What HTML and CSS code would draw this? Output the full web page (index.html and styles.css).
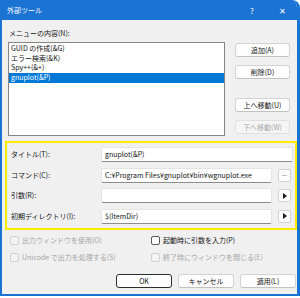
FILE: index.html
```html
<!DOCTYPE html>
<html lang="ja">
<head>
<meta charset="utf-8">
<link rel="stylesheet" href="styles.css">
</head>
<body>
<div class="window">
  <div class="titlebar">
    <span class="title">外部ツール</span>
    <span class="tb-help">?</span>
    <span class="tb-close">✕</span>
  </div>
  <div class="content">
    <div class="top">
      <div class="list-label">メニューの内容(N):</div>
      <div class="listbox">
        <div class="item">GUID の作成(&amp;G)</div>
        <div class="item">エラー検索(&amp;K)</div>
        <div class="item">Spy++(&amp;+)</div>
        <div class="item selected">gnuplot(&amp;P)</div>
      </div>
      <div class="side">
        <div class="btn">追加(A)</div>
        <div class="btn">削除(D)</div>
        <div class="btn gap">上へ移動(U)</div>
        <div class="btn disabled">下へ移動(W)</div>
      </div>
    </div>
    <div class="fields">
      <div class="flabel">タイトル(T):</div>
      <div class="input wide">gnuplot(&amp;P)</div>
      <div class="flabel">コマンド(C):</div>
      <div class="input">C:¥Program Files¥gnuplot¥bin¥wgnuplot.exe</div>
      <div class="sbtn">...</div>
      <div class="flabel">引数(R):</div>
      <div class="input"></div>
      <div class="sbtn"><span class="tri"></span></div>
      <div class="flabel">初期ディレクトリ(I):</div>
      <div class="input">$(ItemDir)</div>
      <div class="sbtn"><span class="tri"></span></div>
    </div>
    <div class="checks">
      <div class="check disabled"><span class="box"></span>出力ウィンドウを使用(O)</div>
      <div class="check"><span class="box"></span>起動時に引数を入力(P)</div>
      <div class="check disabled"><span class="box"></span>Unicode で出力を処理する(S)</div>
      <div class="check disabled"><span class="box"></span>終了時にウィンドウを閉じる(E)</div>
    </div>
    <div class="actions">
      <div class="btn default">OK</div>
      <div class="btn">キャンセル</div>
      <div class="btn">適用(L)</div>
    </div>
  </div>
</div>
</body>
</html>
```

FILE: styles.css
```css
html, body {
  margin: 0;
  padding: 0;
  background: #ffffff;
}
body {
  width: 300px;
  height: 298px;
  overflow: hidden;
  font-family: "Noto Sans CJK JP", "Noto Sans", sans-serif;
  font-size: 7px;
  color: #141414;
}
.window {
  width: 300px;
  height: 296px;
  box-sizing: border-box;
  background: #f0f0f0;
  border-left: 2px solid #1b74d3;
  border-right: 3px solid #1b74d3;
  border-bottom: 2px solid #1b74d3;
  border-top-right-radius: 8px;
  overflow: hidden;
  display: flex;
  flex-direction: column;
}
.titlebar {
  height: 20px;
  flex: none;
  background: #1b74d3;
  color: #ffffff;
  display: flex;
  align-items: center;
  padding-left: 5px;
  font-size: 7px;
}
.title { flex: 1; }
.tb-help { width: 10px; margin-right: 20px; text-align: center; font-size: 8px; }
.tb-close { width: 10px; margin-right: 10px; text-align: center; font-size: 8px; }

.content {
  padding: 0 0 0 6px;
  display: flex;
  flex-direction: column;
}
.top {
  display: grid;
  grid-template-columns: 217px 55px;
  column-gap: 10px;
  padding-top: 8px;
}
.list-label {
  grid-column: 1 / 3;
  height: 10px;
  line-height: 10px;
  padding-left: 1px;
  margin-bottom: 4px;
}
.listbox {
  height: 94px;
  box-sizing: border-box;
  background: #ffffff;
  border: 1px solid #858585;
  padding-top: 1px;
}
.item {
  height: 9.7px;
  line-height: 9.7px;
  padding-left: 2px;
  white-space: nowrap;
}
.item.selected {
  background: #0078d7;
  color: #ffffff;
}
.side {
  display: flex;
  flex-direction: column;
  gap: 8px;
  padding-top: 1px;
}
.btn {
  height: 14px;
  box-sizing: border-box;
  background: #fdfdfd;
  border: 1px solid #d3d3d3;
  border-bottom-color: #c2c2c2;
  border-radius: 3px;
  display: flex;
  align-items: center;
  justify-content: center;
  white-space: nowrap;
}
.btn.gap { margin-top: 11px; }
.btn.disabled {
  color: #a8a8a8;
  background: #f5f5f5;
  border-color: #e0e0e0;
}

.fields {
  margin: 5px 0 0 -3px;
  width: 292px;
  box-sizing: border-box;
  border: 2px solid #fbec00;
  padding: 4px 2px 4px 4px;
  display: grid;
  grid-template-columns: 84px 171px 15px;
  grid-auto-rows: 15px;
  column-gap: 6px;
  row-gap: 5.5px;
  align-items: center;
}
.flabel {
  white-space: nowrap;
  line-height: 15px;
}
.input {
  height: 15px;
  box-sizing: border-box;
  background: #ffffff;
  border: 1px solid #e4e4e4;
  border-bottom: 1px solid #8c8c8c;
  border-radius: 2px;
  padding-left: 3px;
  line-height: 13px;
  white-space: nowrap;
  overflow: hidden;
}
.input.wide { grid-column: 2 / 4; }
.sbtn {
  width: 13px;
  height: 13px;
  box-sizing: border-box;
  background: #fdfdfd;
  border: 1px solid #d3d3d3;
  border-radius: 2px;
  display: flex;
  align-items: center;
  justify-content: center;
  font-size: 6px;
  line-height: 1;
  padding-bottom: 2px;
}
.tri {
  width: 0;
  height: 0;
  border-top: 3px solid transparent;
  border-bottom: 3px solid transparent;
  border-left: 4px solid #1a1a1a;
  margin-top: 2px;
}

.checks {
  display: grid;
  grid-template-columns: 141px 140px;
  grid-auto-rows: 17px;
  padding: 2px 0 0 2px;
}
.check {
  display: flex;
  align-items: center;
  gap: 3px;
  white-space: nowrap;
}
.box {
  width: 9px;
  height: 9px;
  box-sizing: border-box;
  border: 1px solid #5a5a5a;
  border-radius: 2px;
  background: #fdfdfd;
  flex: none;
}
.check.disabled { color: #a6a6a6; }
.check.disabled .box { border-color: #cfcfcf; background: #f3f3f3; }

.actions {
  display: flex;
  justify-content: flex-end;
  gap: 6px;
  padding: 8px 1px 0 0;
}
.actions .btn { width: 56px; }
.actions .btn.default {
  border: 1px solid #2b2b2b;
  box-shadow: inset 0 0 0 1px #ffffff;
}
```
